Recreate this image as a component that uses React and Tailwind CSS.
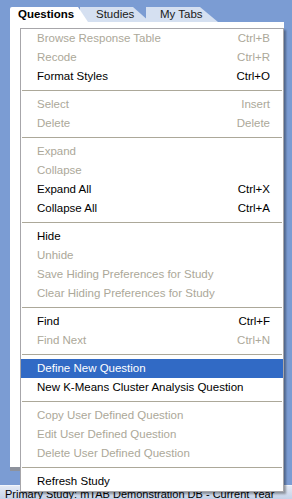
import React from 'react';

const groups = [
    [
        { label: 'Browse Response Table', key: 'Ctrl+B', off: true },
        { label: 'Recode', key: 'Ctrl+R', off: true },
        { label: 'Format Styles', key: 'Ctrl+O' },
    ],
    [
        { label: 'Select', key: 'Insert', off: true },
        { label: 'Delete', key: 'Delete', off: true },
    ],
    [
        { label: 'Expand', off: true },
        { label: 'Collapse', off: true },
        { label: 'Expand All', key: 'Ctrl+X' },
        { label: 'Collapse All', key: 'Ctrl+A' },
    ],
    [
        { label: 'Hide' },
        { label: 'Unhide', off: true },
        { label: 'Save Hiding Preferences for Study', off: true },
        { label: 'Clear Hiding Preferences for Study', off: true },
    ],
    [
        { label: 'Find', key: 'Ctrl+F' },
        { label: 'Find Next', key: 'Ctrl+N', off: true },
    ],
    [
        { label: 'Define New Question', active: true },
        { label: 'New K-Means Cluster Analysis Question' },
    ],
    [
        { label: 'Copy User Defined Question', off: true },
        { label: 'Edit User Defined Question', off: true },
        { label: 'Delete User Defined Question', off: true },
    ],
    [
        { label: 'Refresh Study' },
    ],
];

function MenuItem({ item }) {
    const color = item.active ? 'bg-[#316ac5] text-white' : item.off ? 'text-[#aca899]' : 'text-black';
    return (
        <div className={`h-[19px] flex items-center justify-between pl-[16px] pr-[13px] ${color}`}>
            <span>{item.label}</span>
            {item.key && <span>{item.key}</span>}
        </div>
    );
}

export default function App() {
    return (
        <div className="relative w-[292px] h-[499px] overflow-hidden bg-[#7b9cd3] text-[11.5px] leading-none font-['Liberation_Sans',Arial,sans-serif] flex flex-col">
            {/* tab strip */}
            <div className="h-[22px] shrink-0 flex items-end pl-[10px]">
                <div className="relative z-10 w-[78px] h-[15px] pl-[8px] pt-[2px] bg-white rounded-tl-[2px] font-bold text-black [clip-path:polygon(0_0,68px_0,78px_15px,0_15px)]">
                    Questions
                </div>
                <div className="-ml-[8px] w-[70px] h-[15px] pl-[16px] pt-[2px] bg-[#d5e0f1] text-[#1a1a1a] [clip-path:polygon(0_0,53px_0,70px_15px,0_15px)]">
                    Studies
                </div>
                <div className="-ml-[4px] w-[72px] h-[15px] pl-[14px] pt-[2px] bg-[#d5e0f1] text-[#1a1a1a] [clip-path:polygon(0_0,54px_0,72px_15px,0_15px)]">
                    My Tabs
                </div>
            </div>

            {/* tab body */}
            <div className="ml-[10px] w-[274px] h-[449px] shrink-0 bg-white border-b-[4px] border-[#8d929c]"></div>

            {/* status bar */}
            <div className="mt-auto h-[14px] pl-[5px] pt-[3px] whitespace-nowrap text-[11px] text-black bg-gradient-to-b from-[#e4eaf5] to-[#c5d2e8] border-t border-[#f2f5fb]">
                Primary Study: mTAB Demonstration DB - Current Year
            </div>

            {/* dropdown menu */}
            <div className="absolute left-[20px] top-[28px] w-[264px] bg-white border border-[#a7a6aa] shadow-[2px_2px_2px_rgba(0,0,0,0.35)]">
                {groups.map((group, gi) => (
                    <div key={gi}>
                        {gi > 0 && <div className="my-[4px] mx-[1px] h-px bg-[#aca899]"></div>}
                        {group.map(item => <MenuItem key={item.label} item={item} />)}
                    </div>
                ))}
            </div>
        </div>
    );
}
